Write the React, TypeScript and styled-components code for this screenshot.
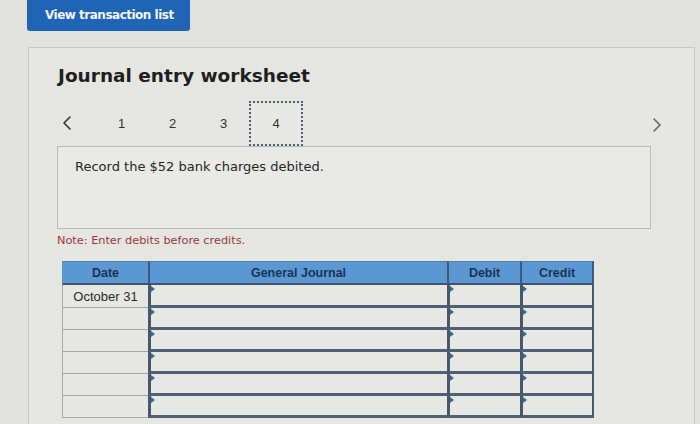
import styled, { createGlobalStyle } from "styled-components";

const GlobalStyle = createGlobalStyle`
  html, body {
    margin: 0;
    padding: 0;
    background: #e1e1de;
    height: 424px;
    overflow: hidden;
  }
`;

const Page = styled.div`
  padding-left: 27px;
  font-family: "DejaVu Sans", Verdana, sans-serif;
`;

const TopButton = styled.button`
  display: block;
  width: 163px;
  height: 31px;
  border: none;
  border-radius: 0 0 3px 3px;
  background: #1f64b5;
  color: #f4f6fa;
  font-family: "DejaVu Sans", Verdana, sans-serif;
  font-weight: bold;
  font-size: 12px;
  letter-spacing: -0.5px;
  text-align: left;
  padding: 0 0 1px 18px;
`;

const Panel = styled.div`
  margin: 16px 0 0 1px;
  width: 667px;
  height: 400px;
  box-sizing: border-box;
  border: 1px solid #c6c6c3;
  border-bottom: none;
  background: #e5e5e2;
  padding: 16px 0 0 28px;
`;

const Title = styled.h1`
  margin: 0 0 0 1px;
  font-size: 18.5px;
  font-weight: bold;
  color: #1f1f1f;
  line-height: 24px;
`;

const NavRow = styled.div`
  display: flex;
  align-items: center;
  height: 45px;
  margin-top: 13px;
  width: 607px;
`;

const Chevron = styled.span<{ side: "left" | "right" }>`
  display: flex;
  width: 12px;
  margin-left: ${(p) => (p.side === "left" ? "5px" : "auto")};
  margin-top: ${(p) => (p.side === "left" ? "-2px" : "3px")};
  color: ${(p) => (p.side === "left" ? "#333" : "#666")};
`;

const Tab = styled.div<{ active?: boolean }>`
  width: ${(p) => (p.active ? "54px" : "51px")};
  height: 45px;
  box-sizing: border-box;
  display: flex;
  align-items: center;
  justify-content: center;
  font-family: "Liberation Sans", Arial, sans-serif;
  font-size: 13px;
  color: #333;
  border: ${(p) => (p.active ? "2px dotted #4e5f75" : "none")};
  background: ${(p) => (p.active ? "#e8e8e6" : "transparent")};
  position: relative;
  z-index: 1;
`;

const TabSpacer = styled.div`
  width: 22px;
`;

const RecordBox = styled.div`
  width: 594px;
  height: 83px;
  box-sizing: border-box;
  border: 1px solid #b9b9b6;
  background: #e9e9e6;
  padding: 12px 0 0 17px;
  font-size: 13px;
  color: #262626;
`;

const Note = styled.div`
  margin-top: 5px;
  font-size: 11.3px;
  color: #9b3545;
`;

const Table = styled.div`
  margin: 14px 0 0 5px;
  width: 532px;
  display: grid;
  grid-template-columns: 86px 299px 73px 74px;
  grid-template-rows: 24px 23px;
  grid-auto-rows: 22px;
  font-family: "Liberation Sans", Arial, sans-serif;
  font-size: 12.5px;
`;

const HeadCell = styled.div<{ first?: boolean }>`
  box-sizing: border-box;
  background: #5b98d3;
  color: #1b3353;
  font-weight: bold;
  display: flex;
  align-items: center;
  justify-content: center;
  border-top: 1px solid #4b7fb0;
  border-left: ${(p) => (p.first ? "1px solid #6b8fb3" : "2px solid #3f5a78")};
  border-bottom: 2px solid #3e5470;
`;

const HeadRight = styled(HeadCell)`
  border-right: 2px solid #3f5a78;
`;

const DateCell = styled.div`
  box-sizing: border-box;
  border-left: 1px solid #a9a9a6;
  border-bottom: 1px solid #a9a9a6;
  background: #e6e6e3;
  color: #2a2a2a;
  font-size: 13px;
  display: flex;
  align-items: center;
  justify-content: center;
  padding-top: 1px;
`;

const EntryCell = styled.div<{ last?: boolean }>`
  box-sizing: border-box;
  border-left: 3px solid #48586b;
  border-bottom: 3px solid #506074;
  border-right: ${(p) => (p.last ? "2px solid #48586b" : "none")};
  background: #e7e7e4;
  position: relative;

  &::before {
    content: "";
    position: absolute;
    left: 0;
    top: 1px;
    border-top: 3px solid transparent;
    border-bottom: 3px solid transparent;
    border-left: 4px solid #3c6796;
  }
`;

const rows = ["October 31", "", "", "", "", ""];

function ChevronIcon({ dir }: { dir: "left" | "right" }) {
  return (
    <svg width="10" height="16" viewBox="0 0 10 16" fill="none">
      <path
        d={dir === "left" ? "M8 2 L2 8 L8 14" : "M2 2 L8 8 L2 14"}
        stroke="currentColor"
        strokeWidth="1.6"
        strokeLinecap="round"
        strokeLinejoin="round"
      />
    </svg>
  );
}

export default function App() {
  return (
    <Page>
      <GlobalStyle />
      <TopButton>View transaction list</TopButton>
      <Panel>
        <Title>Journal entry worksheet</Title>
        <NavRow>
          <Chevron side="left">
            <ChevronIcon dir="left" />
          </Chevron>
          <TabSpacer />
          <Tab>1</Tab>
          <Tab>2</Tab>
          <Tab>3</Tab>
          <Tab active>4</Tab>
          <Chevron side="right">
            <ChevronIcon dir="right" />
          </Chevron>
        </NavRow>
        <RecordBox>Record the $52 bank charges debited.</RecordBox>
        <Note>Note: Enter debits before credits.</Note>
        <Table>
          <HeadCell first>Date</HeadCell>
          <HeadCell>General Journal</HeadCell>
          <HeadCell>Debit</HeadCell>
          <HeadRight>Credit</HeadRight>
          {rows.map((d, i) => [
            <DateCell key={`d${i}`}>{d}</DateCell>,
            <EntryCell key={`g${i}`} />,
            <EntryCell key={`b${i}`} />,
            <EntryCell key={`c${i}`} last />,
          ])}
        </Table>
      </Panel>
    </Page>
  );
}
